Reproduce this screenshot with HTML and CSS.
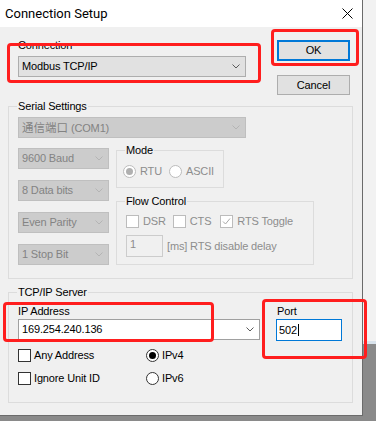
FILE: index.html
```html
<!DOCTYPE html>
<html>
<head>
<meta charset="utf-8">
<link rel="stylesheet" href="styles.css">
</head>
<body>
<div class="window">
  <div class="titlebar">
    <span class="title">Connection Setup</span>
    <svg class="close" viewBox="0 0 11 11"><path d="M0.5 0.5L10.5 10.5M10.5 0.5L0.5 10.5" stroke="#000" stroke-width="1" fill="none"/></svg>
  </div>
  <div class="client">
    <div class="toprow">
      <div class="conn">
        <div class="label">Connection</div>
        <div class="combo conn-combo"><span>Modbus TCP/IP</span><svg class="chev" viewBox="0 0 8 5"><polyline points="0.5,0.5 4,4 7.5,0.5" fill="none" stroke="#5a5a5a" stroke-width="1"/></svg></div>
      </div>
      <div class="buttons">
        <div class="btn btn-default">OK</div>
        <div class="btn btn-cancel">Cancel</div>
      </div>
    </div>

    <div class="group serial">
      <div class="legend">Serial Settings</div>
      <div class="combo disabled com"><span><span class="cjk">通信端口</span> (COM1)</span><svg class="chev" viewBox="0 0 8 5"><polyline points="0.5,0.5 4,4 7.5,0.5" fill="none" stroke="#b4b4b4" stroke-width="1"/></svg></div>
      <div class="serial-row">
        <div class="serial-left">
          <div class="combo disabled"><span>9600 Baud</span><svg class="chev" viewBox="0 0 8 5"><polyline points="0.5,0.5 4,4 7.5,0.5" fill="none" stroke="#b4b4b4" stroke-width="1"/></svg></div>
          <div class="combo disabled"><span>8 Data bits</span><svg class="chev" viewBox="0 0 8 5"><polyline points="0.5,0.5 4,4 7.5,0.5" fill="none" stroke="#b4b4b4" stroke-width="1"/></svg></div>
          <div class="combo disabled"><span>Even Parity</span><svg class="chev" viewBox="0 0 8 5"><polyline points="0.5,0.5 4,4 7.5,0.5" fill="none" stroke="#b4b4b4" stroke-width="1"/></svg></div>
          <div class="combo disabled"><span>1 Stop Bit</span><svg class="chev" viewBox="0 0 8 5"><polyline points="0.5,0.5 4,4 7.5,0.5" fill="none" stroke="#b4b4b4" stroke-width="1"/></svg></div>
        </div>
        <div class="serial-right">
          <div class="group mode">
            <div class="legend">Mode</div>
            <div class="opt dis"><span class="rb dis on"></span><span>RTU</span></div>
            <div class="opt dis"><span class="rb dis"></span><span>ASCII</span></div>
          </div>
          <div class="group flow">
            <div class="legend">Flow Control</div>
            <div class="checks">
              <div class="opt dis o-dsr"><span class="cb dis"></span><span>DSR</span></div>
              <div class="opt dis o-cts"><span class="cb dis"></span><span>CTS</span></div>
              <div class="opt dis"><span class="cb dis"><svg viewBox="0 0 11 11"><polyline points="2,5.5 4.5,8 9,2.5" fill="none" stroke="#a8a8a8" stroke-width="1"/></svg></span><span>RTS Toggle</span></div>
            </div>
            <div class="delay">
              <div class="edit dis-edit">1</div>
              <span class="dis-text">[ms] RTS disable delay</span>
            </div>
          </div>
        </div>
      </div>
    </div>

    <div class="group tcp">
      <div class="legend">TCP/IP Server</div>
      <div class="ip-row">
        <div class="ip-col">
          <div class="label">IP Address</div>
          <div class="combo ip-combo"><span>169.254.240.136</span><svg class="chev" viewBox="0 0 8 5"><polyline points="0.5,0.5 4,4 7.5,0.5" fill="none" stroke="#5a5a5a" stroke-width="1"/></svg></div>
        </div>
        <div class="port-col">
          <div class="label port-label">Port</div>
          <div class="port-edit"><span>502</span><span class="caret"></span></div>
        </div>
      </div>
      <div class="options">
        <div class="opt o-tight"><span class="cb"></span><span>Any Address</span></div>
        <div class="opt o-tight"><span class="rb on"></span><span>IPv4</span></div>
        <div class="opt o-tight"><span class="cb"></span><span>Ignore Unit ID</span></div>
        <div class="opt o-tight"><span class="rb"></span><span>IPv6</span></div>
      </div>
    </div>
  </div>
</div>

<div class="mark m1"></div>
<div class="mark m2"></div>
<div class="mark m3"></div>
<div class="mark m4"></div>
</body>
</html>
```

FILE: styles.css
```css
* { box-sizing: border-box; }
html, body { margin: 0; padding: 0; }
body {
  width: 376px;
  height: 421px;
  overflow: hidden;
  position: relative;
  background: linear-gradient(to bottom, #f2f2f2 0, #f2f2f2 341px, #d9e3ec 341px, #d9e3ec 344px, #8a8a8a 344px, #8a8a8a 100%);
  font-family: "Liberation Sans", Arial, sans-serif;
  font-size: 11px;
  letter-spacing: -0.15px;
  color: #000;
}
.window {
  width: 363px;
  height: 416px;
  border-right: 1px solid #6b6b6b;
  border-bottom: 1px solid #6b6b6b;
  background: #f0f0f0;
}
.titlebar {
  height: 27px;
  background: #fff;
  display: flex;
  align-items: center;
  justify-content: space-between;
  padding: 0 9px 0 5px;
}
.title {
  font-family: Roboto, "Liberation Sans", sans-serif;
  font-size: 13px;
  letter-spacing: 0;
  line-height: 27px;
}
.close { width: 11px; height: 11px; display: block; }

.client { height: 388px; padding: 0 0 0 8px; }
.toprow { display: flex; padding-top: 12px; }
.conn { margin-left: 10px; width: 228px; }
.label { line-height: 13px; height: 13px; white-space: nowrap; }
.conn .combo { margin-top: 4px; }
.buttons { margin-left: 31px; margin-top: 1px; width: 73px; display: flex; flex-direction: column; }
.btn {
  height: 21px;
  border: 1px solid #adadad;
  background: #e1e1e1;
  display: flex;
  align-items: center;
  justify-content: center;
  line-height: 13px;
}
.btn-default { border: 2px solid #0078d7; }
.btn-cancel { margin-top: 14px; height: 20px; }

.combo {
  height: 21px;
  border: 1px solid #adadad;
  background: #e1e1e1;
  display: flex;
  align-items: center;
  justify-content: space-between;
  padding: 0 5px 0 3px;
  line-height: 13px;
  white-space: nowrap;
}
.chev { width: 8px; height: 5px; display: block; }
.combo.disabled { background: #cccccc; border-color: #bfbfbf; color: #838383; }
.cjk { font-family: "Noto Sans CJK SC", sans-serif; font-size: 11.5px; letter-spacing: 0; }

.group { position: relative; border: 1px solid #dcdcdc; }
.legend {
  position: absolute;
  top: -7px;
  left: 8px;
  padding: 0 1px;
  background: #f0f0f0;
  line-height: 13px;
  white-space: nowrap;
}
.serial { margin-top: 11px; width: 345px; height: 173px; padding: 10px 0 0 9px; }
.com { width: 228px; }
.serial-row { display: flex; margin-top: 10px; }
.serial-left { width: 91px; display: flex; flex-direction: column; gap: 11px; }
.serial-right { margin-left: 7px; margin-top: 2px; }
.mode { width: 108px; height: 38px; padding: 14px 0 0 6px; display: flex; gap: 7px; align-items: flex-start; }
.flow { margin-top: 13px; width: 198px; height: 64px; padding: 13px 0 0 9px; }
.checks { display: flex; height: 13px; }
.o-dsr { margin-right: 7px; }
.o-cts { margin-right: 9px; }

.opt { display: flex; align-items: center; gap: 4px; height: 13px; line-height: 13px; white-space: nowrap; }
.opt.o-tight { gap: 3px; }
.opt.dis { color: #8d8d8d; }
.cb { width: 13px; height: 13px; border: 1px solid #333; background: #fff; flex: none; display: block; }
.cb svg { display: block; width: 11px; height: 11px; }
.cb.dis { border-color: #bcbcbc; background: #fff; }
.rb {
  width: 13px; height: 13px; border: 1px solid #333; border-radius: 50%;
  background: #fff; display: flex; align-items: center; justify-content: center; flex: none;
}
.rb.dis { border-color: #bcbcbc; }
.rb.on::after { content: ""; width: 7px; height: 7px; border-radius: 50%; background: #000; }
.rb.dis.on::after { background: #b0b0b0; }

.delay { display: flex; align-items: center; margin-top: 7px; }
.edit { width: 37px; height: 22px; border: 1px solid #cccccc; background: #f0f0f0; padding: 2px 0 0 3px; line-height: 13px; color: #8d8d8d; }
.dis-text { margin-left: 4px; color: #8d8d8d; line-height: 13px; white-space: nowrap; }

.tcp { margin-top: 13px; width: 345px; height: 111px; padding: 12px 0 0 9px; }
.ip-row { display: flex; }
.ip-col { width: 242px; }
.ip-col .combo { margin-top: 1px; background: #fff; border-color: #a0a0a0; }
.port-col { margin-left: 16px; }
.port-label { padding-left: 1px; }
.port-edit {
  margin-top: 1px; width: 66px; height: 22px; border: 1px solid #0078d7; background: #fff;
  padding: 0 2px; display: flex; align-items: center; line-height: 13px;
}
.caret { width: 1px; height: 12px; background: #000; margin-left: 1px; }
.options { display: grid; grid-template-columns: 128px auto; row-gap: 10px; margin-top: 8px; }

.mark { position: absolute; border: 3px solid #ff1e1e; border-radius: 4px; }
.m1 { left: 7px; top: 43px; width: 254px; height: 40px; }
.m2 { left: 271px; top: 29px; width: 88px; height: 37px; }
.m3 { left: 3px; top: 302px; width: 211px; height: 40px; }
.m4 { left: 262px; top: 299px; width: 105px; height: 60px; }
```
